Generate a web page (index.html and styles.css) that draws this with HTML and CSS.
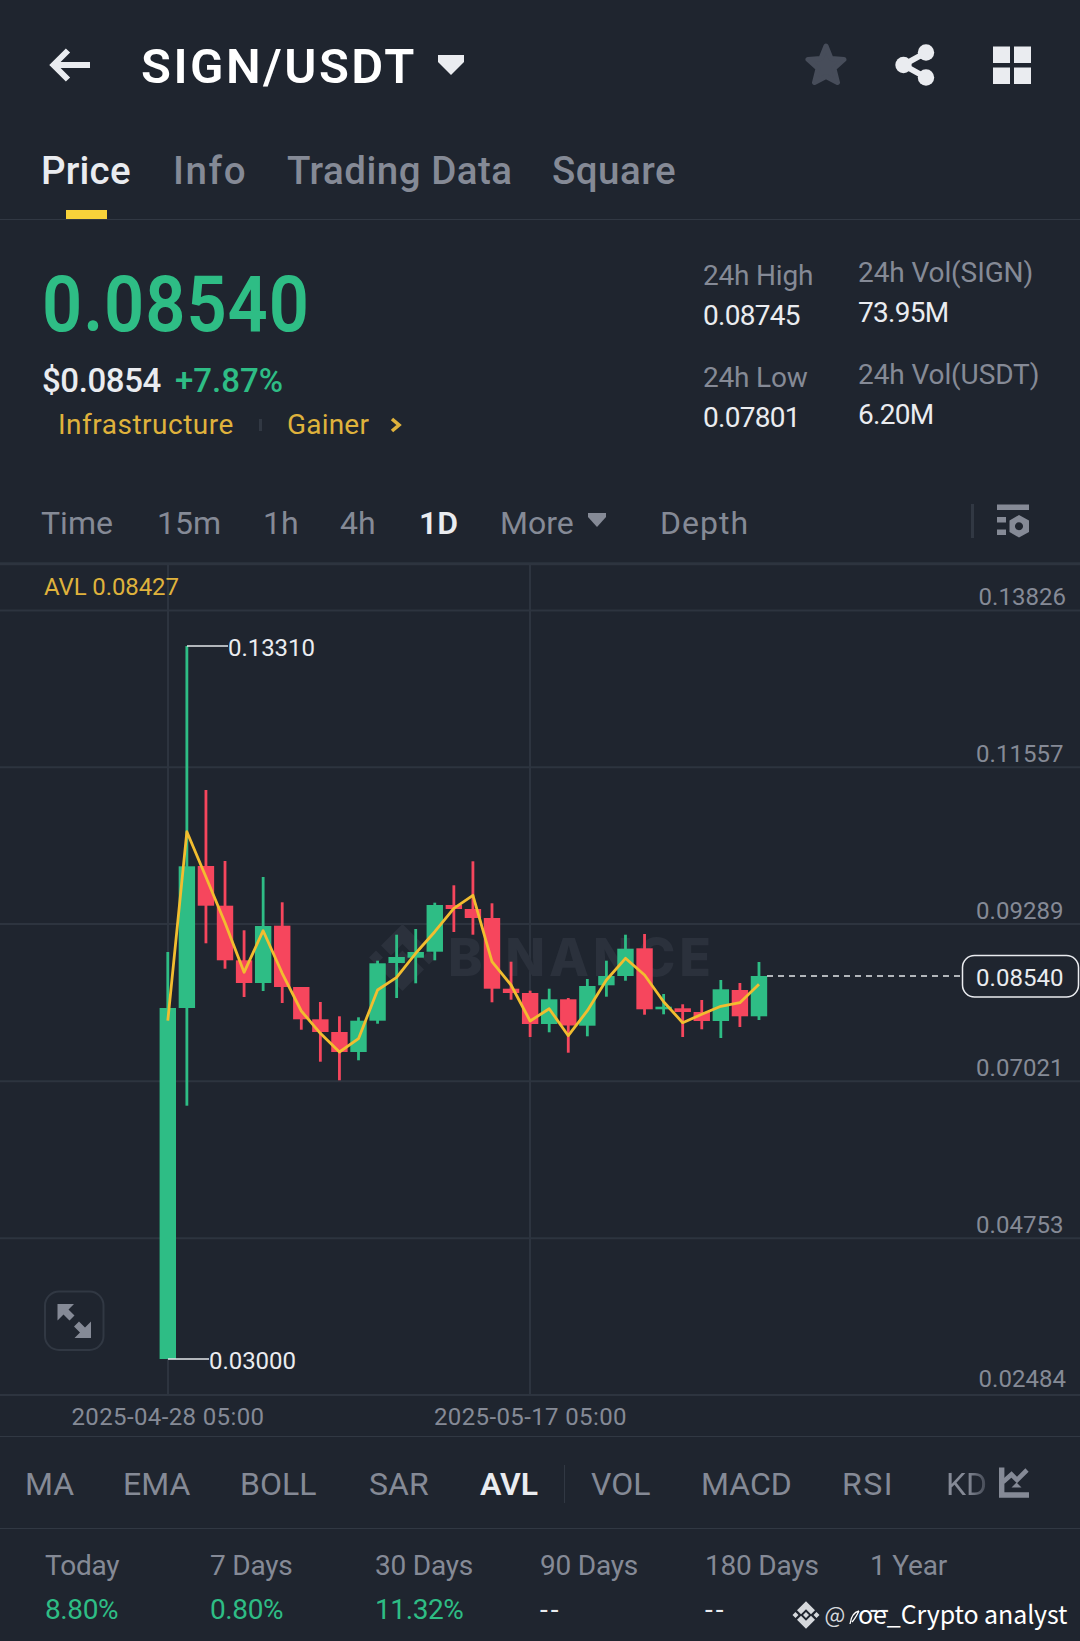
FILE: index.html
```html
<!DOCTYPE html>
<html lang="en">
<head>
  <meta charset="UTF-8">
  <meta name="viewport" content="width=device-width, initial-scale=1.0">
  <title>SIGN/USDT</title>
  <link rel="stylesheet" href="styles.css">
</head>
<body>
  <header class="header">
    <svg class="back" width="42" height="34" viewBox="0 0 42 34" fill="none" stroke="#eaecf0" stroke-width="6">
      <path d="M41 17H5M19 2.5L4.500 17L19 31.500"/>
    </svg>
    <h1 class="pair">SIGN/USDT</h1>
    <svg class="caret" width="26" height="20" viewBox="0 0 26 20"><path d="M0 0H26V7L13 20L0 7Z" fill="#eaecf0"/></svg>
    <div class="actions">
      <svg width="42" height="43" viewBox="0 0 42 43">
        <path d="M21 3L26 15.500L39 16.500L29 25.500L32.500 39.500L21 33.500L9.500 39.500L13 25.500L3 16.500L16 15.500Z" fill="#474d5a" stroke="#474d5a" stroke-width="5" stroke-linejoin="round"/>
      </svg>
      <svg width="40" height="42" viewBox="0 0 40 42" fill="#eaecf0">
        <path d="M31 8.500L8.500 21L31 33.500" fill="none" stroke="#eaecf0" stroke-width="6"/>
        <circle cx="8.500" cy="21" r="8.200"/><circle cx="31" cy="8.500" r="8.200"/><circle cx="31" cy="33.500" r="8.200"/>
      </svg>
      <svg width="38" height="38" viewBox="0 0 38 38" fill="#eaecf0">
        <path d="M0 0.500h17v16.500h-17zM21 0.500h17v16.500h-17zM0 21.500h17v16.500h-17zM21 21.500h17v16.500h-17z"/>
      </svg>
    </div>
  </header>

  <nav class="tabs">
    <a class="active">Price</a>
    <a class="info">Info</a>
    <a>Trading Data</a>
    <a>Square</a>
  </nav>

  <section class="summary">
    <div class="quote">
      <div class="price"><span>0.08540</span></div>
      <div class="fiat"><span class="usd">$0.0854</span><span class="change">+7.87%</span></div>
      <div class="tags">
        <span class="tag-infra">Infrastructure</span>
        <i></i>
        <span class="tag-gainer">Gainer</span>
        <svg width="12" height="16" viewBox="0 0 12 16"><path d="M2 2L9 8L2 14" fill="none" stroke="#dfb23c" stroke-width="3.600"/></svg>
      </div>
    </div>
    <div class="stats">
      <dl><dt>24h High</dt><dd>0.08745</dd></dl>
      <dl><dt>24h Low</dt><dd>0.07801</dd></dl>
    </div>
    <div class="stats volume">
      <dl><dt>24h Vol(SIGN)</dt><dd>73.95M</dd></dl>
      <dl><dt>24h Vol(USDT)</dt><dd>6.20M</dd></dl>
    </div>
  </section>

  <nav class="intervals">
    <a>Time</a>
    <a>15m</a>
    <a>1h</a>
    <a>4h</a>
    <a class="active">1D</a>
    <a>More <svg width="18" height="14" viewBox="0 0 18 14"><path d="M0 0H18V4L9 14L0 4Z" fill="#858a96"/></svg></a>
    <a class="depth">Depth</a>
    <div class="settings">
      <svg width="32" height="34" viewBox="0 0 32 34" fill="#858a96">
        <path d="M0 0.500h32v5.500H0zM0 13h9v5.500H0zM0 25.500h9v5.500H0z"/>
        <path fill-rule="evenodd" d="M22 11L32 16.500V28L22 33.500L12.500 28V16.500ZM22 18.200a4 4 0 1 0 0.010 0Z"/>
      </svg>
    </div>
  </nav>

  <svg class="chart" id="chart" width="1080" height="874" viewBox="0 562 1080 874">
    <path class="edge" d="M0 563.700H1080"/>
    <path class="grid" d="M0 610.500H1080M0 767.300H1080M0 924H1080M0 1081.300H1080M0 1238.300H1080M0 1395H1080M168 564V1395M530 564V1395"/>

    <g class="brand">
      <path d="M402.500 924L424 945.500L414 955.500L402.500 944L391 955.500L381 945.500ZM402.500 991L424 969.500L414 959.500L402.500 971L391 959.500L381 969.500ZM376 950.500L383 957.500L376 964.500L369 957.500ZM429 950.500L436 957.500L429 964.500L422 957.500ZM402.500 950.500L409.500 957.500L402.500 964.500L395.500 957.500Z"/>
      <text x="448" y="976" textLength="263">BINANCE</text>
    </g>

    <g id="candles"></g>
    <polyline class="avl" id="avl"/>

    <path class="leader" d="M187 646H228M168 1359H209"/>
    <path class="last" d="M767 976H962"/>

    <text class="avl-label" x="44" y="595" textLength="135">AVL 0.08427</text>
    <text class="mark" x="228" y="656" textLength="87">0.13310</text>
    <text class="mark" x="209" y="1368.700" textLength="87">0.03000</text>

    <g class="axis">
      <text x="978.500" y="605" textLength="87.500">0.13826</text>
      <text x="976" y="762" textLength="87.500">0.11557</text>
      <text x="976" y="919" textLength="87.500">0.09289</text>
      <text x="976" y="1076" textLength="87.500">0.07021</text>
      <text x="976" y="1233" textLength="87.500">0.04753</text>
      <text x="978.500" y="1387" textLength="87.500">0.02484</text>
      <text x="71.500" y="1425" textLength="192.500">2025-04-28 05:00</text>
      <text x="434" y="1425" textLength="192.500">2025-05-17 05:00</text>
    </g>

    <rect class="badge" x="962.500" y="955.500" width="116" height="41.500" rx="12"/>
    <text class="mark" x="976" y="986" textLength="87.500">0.08540</text>

    <rect class="expand" x="45" y="1291.500" width="58.500" height="58.500" rx="14"/>
    <path fill="#858a96" d="M57.500 1304H74L68.500 1309.500L74.500 1315.500L69.500 1320.500L63.500 1314.500L57.500 1320.500ZM91 1338H74.500L80 1332.500L74 1326.500L79 1321.500L85 1327.500L91 1321.500Z"/>
  </svg>

  <nav class="indicators">
    <a>MA</a>
    <a>EMA</a>
    <a>BOLL</a>
    <a>SAR</a>
    <a class="active">AVL</a>
    <a>VOL</a>
    <a>MACD</a>
    <a class="rsi">RSI</a>
    <a class="fade">KD</a>
    <svg width="30" height="31" viewBox="0 0 30 31" fill="none" stroke="#858a96">
      <path d="M2.700 0.500V28H30" stroke-width="5.400"/>
      <path d="M4 15L12.500 7.500L18 13L28 3" stroke-width="4.600"/>
      <path d="M17.500 15.500L22.500 20.500H12.500Z" fill="#858a96" stroke="none"/>
    </svg>
  </nav>

  <section class="periods">
    <dl><dt>Today</dt><dd>8.80%</dd></dl>
    <dl><dt>7 Days</dt><dd>0.80%</dd></dl>
    <dl><dt>30 Days</dt><dd>11.32%</dd></dl>
    <dl><dt>90 Days</dt><dd class="none">--</dd></dl>
    <dl><dt>180 Days</dt><dd class="none">--</dd></dl>
    <dl><dt>1 Year</dt><dd class="none">--</dd></dl>
  </section>

  <svg class="author" width="290" height="56" viewBox="790 1585 290 56">
    <path fill="#d5d8dc" d="M806 1601.300L815 1610.300L811 1614.300L806 1609.300L801 1614.300L797 1610.300ZM806 1628.700L815 1619.700L811 1615.700L806 1620.700L801 1615.700L797 1619.700ZM795.500 1612L798.500 1615L795.500 1618L792.500 1615ZM816.500 1612L819.500 1615L816.500 1618L813.500 1615ZM806 1612L809 1615L806 1618L803 1615Z"/>
    <text class="at" x="824.500" y="1623" textLength="21">@</text>
    <path d="M850 1624C851 1617 854 1612 859 1611M852 1622C855 1619 857 1615 859 1611" fill="none" stroke="#fff" stroke-width="1.300"/>
    <text x="858" y="1624" textLength="209.500">oe_Crypto analyst</text>
  </svg>

  <script src="chart.js"></script>
</body>
</html>
```
FILE: styles.css
```css
:root {
  --bg: #1f252f;
  --line: #313843;
  --text: #eaecf0;
  --muted: #858a96;
  --green: #2ebd85;
  --red: #f6465d;
  --yellow: #dfb23c;
}

* {
  box-sizing: border-box;
}

body {
  margin: 0;
  width: 1080px;
  height: 1641px;
  position: relative;
  overflow: hidden;
  background: var(--bg);
  color: var(--text);
  font-family: Roboto, "Liberation Sans", sans-serif;
}

svg {
  display: block;
  flex: none;
}

dl, dt, dd, h1 {
  margin: 0;
}

.header {
  display: flex;
  align-items: center;
  height: 129px;
  padding: 0 49px 0 49px;
}

.pair {
  width: 278px;
  margin-left: 50px;
  padding-top: 4px;
  color: #fff;
  font-size: 49px;
  font-weight: 600;
  letter-spacing: 2.5px;
  white-space: nowrap;
}

.caret {
  margin-left: 19px;
}

.actions {
  display: flex;
  align-items: center;
  margin-left: auto;
}

.actions svg:nth-child(2) {
  margin: 0 58px 0 48px;
}

.tabs {
  display: grid;
  grid-template-columns: 131px 115px 265px 200px;
  height: 91px;
  padding-left: 41px;
  border-bottom: 1px solid var(--line);
  color: var(--muted);
  font-size: 38.5px;
  font-weight: 500;
  line-height: 83px;
  letter-spacing: 0.5px;
}

.tabs a {
  position: relative;
  white-space: nowrap;
}

.tabs .info {
  padding-left: 1px;
  letter-spacing: 1.6px;
}

.active {
  color: var(--text);
}

.tabs .active {
  letter-spacing: 0.2px;
}

.tabs .active::after {
  content: "";
  position: absolute;
  left: 25px;
  bottom: 0;
  width: 41px;
  height: 9px;
  background: #f8d33a;
}

.summary {
  display: flex;
  height: 264px;
}

.quote {
  width: 703px;
  padding: 40px 0 0 42px;
}

.price {
  height: 90px;
  color: var(--green);
  font-size: 77px;
  font-weight: 600;
  line-height: 91px;
  letter-spacing: 1px;
}

.price span {
  display: inline-block;
  transform: scaleX(0.915);
  transform-origin: left;
}

.fiat {
  display: flex;
  margin-top: 9px;
  font-size: 33px;
  font-weight: 500;
  line-height: 44px;
}

.usd {
  width: 133px;
  letter-spacing: -0.4px;
}

.change {
  color: var(--green);
}

.tags {
  display: flex;
  align-items: center;
  margin-top: 2px;
  padding-left: 16px;
  color: var(--yellow);
  font-size: 28px;
  line-height: 40px;
}

.tag-infra {
  width: 201px;
  letter-spacing: 0.5px;
}

.tags i {
  width: 3px;
  height: 12px;
  margin-right: 25px;
  background: var(--line);
}

.tag-gainer {
  width: 103px;
  letter-spacing: 0.2px;
}

.stats {
  width: 155px;
  padding-top: 36px;
  font-size: 28px;
  line-height: 40px;
  white-space: nowrap;
}

.stats dl {
  height: 102px;
}

.stats dt {
  color: var(--muted);
  letter-spacing: -0.2px;
}

.stats dd {
  letter-spacing: -0.7px;
}

.volume {
  padding-top: 33px;
}

.volume dt {
  letter-spacing: -0.1px;
}

.intervals {
  display: grid;
  grid-template-columns: 116px 106px 77px 79px 81px 160px 308px 100px;
  height: 78px;
  padding-left: 41px;
  color: var(--muted);
  font-size: 32px;
  line-height: 78px;
}

.intervals a {
  display: flex;
  white-space: nowrap;
}

.intervals a svg {
  margin: 29px 0 0 14px;
}

.intervals .depth {
  letter-spacing: 1px;
}

.intervals .active,
.indicators .active {
  color: var(--text);
  font-weight: 600;
}

.settings {
  height: 34px;
  margin-top: 20px;
  margin-left: 3px;
  padding-left: 23px;
  border-left: 3px solid var(--line);
}

.edge,
.grid {
  fill: none;
  stroke: #2d343f;
  stroke-width: 2;
}

.edge {
  stroke-width: 3;
}

.brand {
  fill: #2b313c;
}

.brand text {
  font-family: Inter, sans-serif;
  font-weight: 800;
}

.up {
  fill: var(--green);
}

.down {
  fill: var(--red);
}

.avl {
  fill: none;
  stroke: #f2bd2f;
  stroke-width: 2.8;
  stroke-linejoin: round;
}

.leader,
.last {
  stroke: #e4e6ea;
  stroke-width: 1.6;
}

.last {
  stroke-dasharray: 6 5;
}

.chart text {
  font-size: 24px;
}

.chart .brand text {
  font-size: 52px;
}

.avl-label {
  fill: var(--yellow);
}

.mark {
  fill: var(--text);
}

.axis {
  fill: var(--muted);
}

.badge {
  fill: var(--bg);
  stroke: #eaecf0;
  stroke-width: 1.5;
}

.expand {
  fill: none;
  stroke: var(--line);
  stroke-width: 2;
}

.indicators {
  display: grid;
  grid-template-columns: 98px 117px 129px 111px 111px 110px 141px 104px 53px 30px;
  height: 92px;
  padding: 4px 0 0 25px;
  border-top: 1px solid var(--line);
  color: var(--muted);
  font-size: 32px;
  line-height: 87px;
}

.indicators svg {
  margin-top: 26px;
}

.indicators .active {
  width: 85px;
  background: linear-gradient(var(--line), var(--line)) right 24px top 0 / 1.5px 38px no-repeat;
  background-position: right 24px;
}

.rsi {
  letter-spacing: 1.5px;
}

.fade {
  background: linear-gradient(90deg, var(--muted) 40%, #2a303b 90%);
  -webkit-background-clip: text;
  background-clip: text;
  color: transparent;
}

.periods {
  display: grid;
  grid-template-columns: repeat(6, 165px);
  height: 113px;
  padding: 15px 0 0 45px;
  border-top: 1px solid var(--line);
  font-size: 28px;
  line-height: 44px;
  white-space: nowrap;
}

.periods dt {
  color: var(--muted);
  letter-spacing: -0.2px;
}

.periods dd {
  color: var(--green);
  letter-spacing: -0.4px;
}

.periods .none {
  color: var(--text);
  letter-spacing: 3px;
}

.author {
  position: absolute;
  left: 790px;
  top: 1585px;
}

.author text {
  fill: #fff;
  font-family: "Noto Sans CJK SC", sans-serif;
  font-size: 25px;
}

.author .at {
  fill: #d5d8dc;
  font-size: 22px;
}
```
FILE: chart.js
```js
// [direction, wick top, wick bottom, body top, body bottom, avl]
const candles = [
  ['up', 952, 1359, 1008, 1359, 1020.7],
  ['up', 646, 1105.7, 866.3, 1008, 831.7],
  ['down', 790, 943.3, 866, 905.7, 877],
  ['down', 861, 968.7, 905.7, 960.3, 922.7],
  ['down', 930.3, 997, 960.3, 983, 972.3],
  ['up', 877, 991, 926, 983, 930.7],
  ['down', 902.3, 1003, 925.7, 987, 973.3],
  ['down', 987, 1029.7, 987, 1019.3, 1011],
  ['down', 1002, 1061.7, 1019.3, 1032, 1033.3],
  ['down', 1016.3, 1080.3, 1032, 1052, 1052],
  ['up', 1017.3, 1060.3, 1020.7, 1052, 1038.7],
  ['up', 960.7, 1023.7, 963.3, 1020.7, 990],
  ['up', 934.7, 998, 957, 963, 977.3],
  ['up', 929, 983.3, 952, 957.7, 953.3],
  ['up', 902.7, 960.3, 905, 951.7, 931.7],
  ['down', 885.3, 932, 905, 909, 908.3],
  ['down', 861.3, 934.7, 909, 918, 895.3],
  ['down', 903.3, 1002.3, 918, 988.7, 961.7],
  ['down', 961.7, 999.7, 988.7, 993, 985],
  ['down', 990.7, 1037, 993, 1024, 1021],
  ['up', 988.7, 1032.3, 999.3, 1024, 1008.7],
  ['down', 998, 1052.7, 999.3, 1025.5, 1035.7],
  ['up', 979, 1036.3, 986, 1025.7, 1010.7],
  ['up', 960.7, 996.7, 976, 985.3, 980],
  ['up', 934.7, 980.7, 948.7, 976, 958.3],
  ['down', 934, 1014.7, 948.3, 1009.3, 975],
  ['up', 994, 1014.3, 1006.7, 1009.3, 1001.7],
  ['down', 1004.3, 1037, 1008.3, 1012, 1022.7],
  ['down', 1000, 1029.3, 1012, 1021, 1014.3],
  ['up', 980, 1038, 989.3, 1021, 1006.3],
  ['down', 983, 1027, 990, 1016.3, 1002.7],
  ['up', 962, 1020, 976, 1016.3, 984.3]
];

const startX = 167.8;
const step = 19.07;
const bodyWidth = 16.4;
const svgNS = 'http://www.w3.org/2000/svg';
const group = document.getElementById('candles');

function addRect(cls, x, y, width, height) {
  const rect = document.createElementNS(svgNS, 'rect');
  rect.setAttribute('class', cls);
  rect.setAttribute('x', x);
  rect.setAttribute('y', y);
  rect.setAttribute('width', width);
  rect.setAttribute('height', height);
  group.appendChild(rect);
}

const points = candles.map(([dir, high, low, top, bottom, avl], i) => {
  const x = startX + i * step;
  addRect(dir, x - 1.4, high, 2.8, low - high);
  addRect(dir, x - bodyWidth / 2, top, bodyWidth, bottom - top);
  return x + ',' + avl;
});

document.getElementById('avl').setAttribute('points', points.join(' '));
```
